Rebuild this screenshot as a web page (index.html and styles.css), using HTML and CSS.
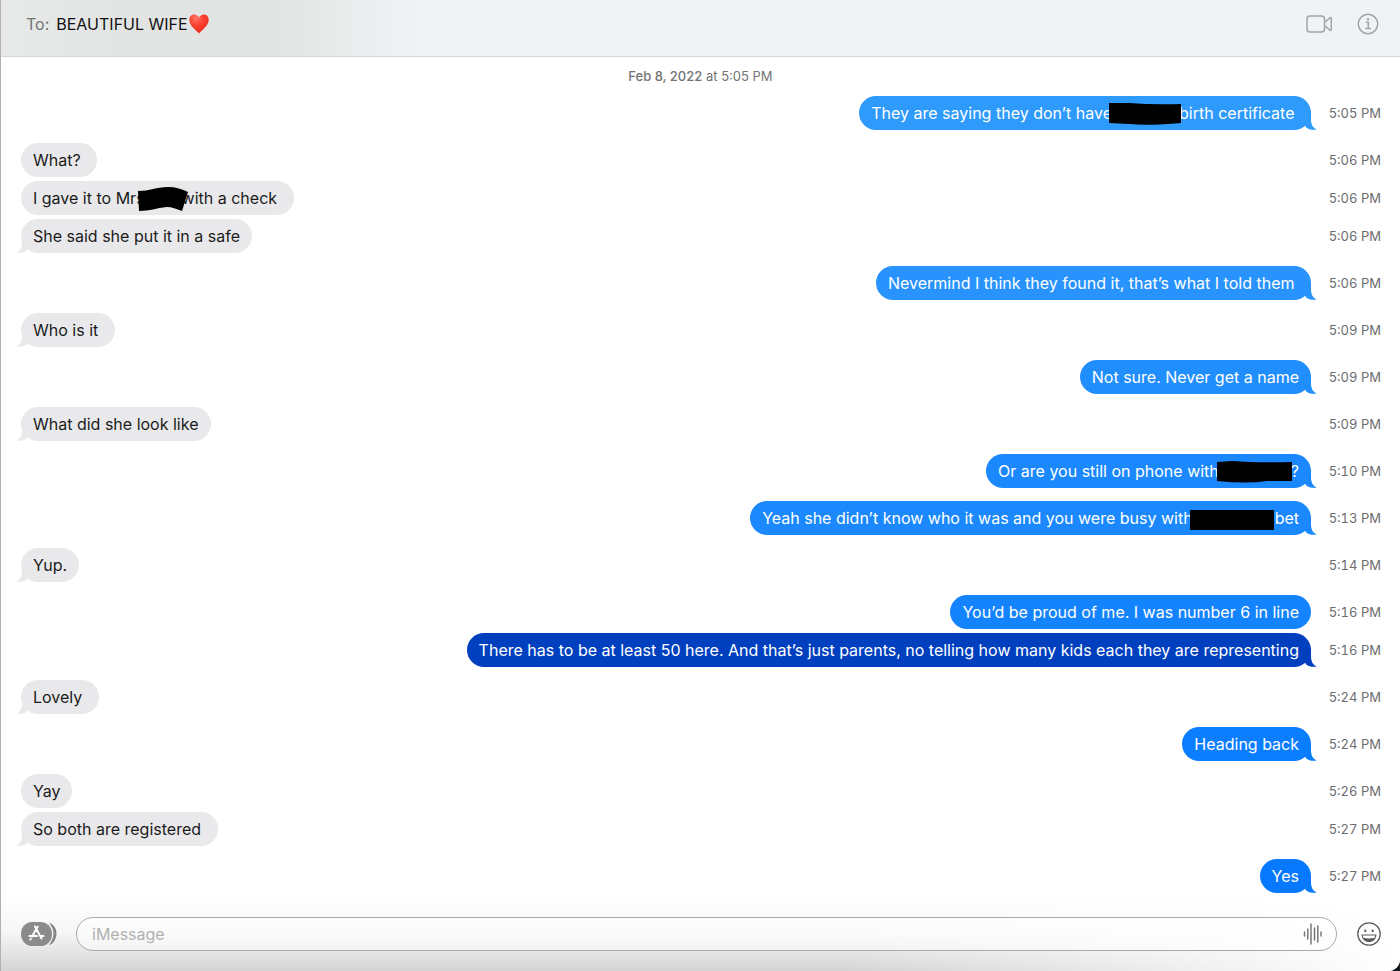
FILE: index.html
```
<!DOCTYPE html>
<html lang="en">
<head>
<meta charset="utf-8">
<meta name="viewport" content="width=device-width, initial-scale=1">
<title>Messages</title>
<link rel="stylesheet" href="styles.css">
</head>
<body>
<svg class="defs" width="0" height="0" aria-hidden="true">
  <symbol id="tail" viewBox="0 0 18 18"><path d="M4 0H12V7C12 12 13.500 15.800 17.800 17.500C13.500 18.300 10 17.500 7 15.200L4 10Z" fill="currentColor"/></symbol>
</svg>
<div class="window">
  <header class="topbar">
    <h1 class="recipient"><span class="to">To:</span><span class="name">BEAUTIFUL WIFE</span><svg class="heart" viewBox="0 0 20 20" role="img" aria-label="Red heart"><defs><radialGradient id="hg" cx="35%" cy="20%" r="85%"><stop offset="0" stop-color="#ff7867"/><stop offset=".4" stop-color="#fc4432"/><stop offset="1" stop-color="#e5261c"/></radialGradient></defs><path d="M10 19.500C7 16 .3 12 .3 5.800C.3 2.700 2.500.6 5.100.6C7.400.6 9.200 1.900 10 3.700C10.800 1.900 12.600.6 14.900.6C17.500.6 19.700 2.700 19.700 5.800C19.700 12 13 16 10 19.500Z" fill="url(#hg)"/></svg></h1>
    <div class="actions">
      <button class="icon-btn" type="button" aria-label="Video call"><svg width="27" height="20" viewBox="0 0 27 20"><rect x="1" y="2" width="17.500" height="16" rx="3" /><path d="M18.500 8.300L24 3.800Q25.300 3 25.300 4.500V15.500Q25.300 17 24 16.200L18.500 11.700"/></svg></button>
      <button class="icon-btn" type="button" aria-label="Details"><svg width="22" height="22" viewBox="0 0 22 22"><circle cx="11" cy="11" r="9.700"/><path d="M8.700 9.200H11.300V15.300M8.300 15.500H14"/><circle class="dot" cx="11" cy="6.200" r="1.200"/></svg></button>
    </div>
  </header>

  <main class="transcript">
    <p class="date"><b>Feb 8, 2022</b> at 5:05 PM</p>
    <ol class="messages">
      <li class="row sent t1"><p class="bubble">They are saying they don’t have<svg class="redact r1" viewBox="0 0 72 22" aria-hidden="true"><path d="M0 0H20Q45 2 72 1V20Q40 23 20 21L0 20Z"/></svg>birth certificate&nbsp;<svg class="tail"><use href="#tail"/></svg></p><time>5:05 PM</time></li>
      <li class="row got gap"><p class="bubble">What?&nbsp;</p><time>5:06 PM</time></li>
      <li class="row got"><p class="bubble">I gave it to Mrs<svg class="redact r2" viewBox="0 0 50 24" aria-hidden="true"><path d="M0 4C12 4 18 0 30 0C38 0 44 2 50 5L44 24C38 22 34 20 29 20C18 21 12 24 1 24Z"/></svg>with a check&nbsp;</p><time>5:06 PM</time></li>
      <li class="row got"><p class="bubble">She said she put it in a safe<svg class="tail"><use href="#tail"/></svg></p><time>5:06 PM</time></li>
      <li class="row sent gap t2"><p class="bubble">Nevermind I think they found it, that’s what I told them&nbsp;<svg class="tail"><use href="#tail"/></svg></p><time>5:06 PM</time></li>
      <li class="row got gap"><p class="bubble">Who is it&nbsp;<svg class="tail"><use href="#tail"/></svg></p><time>5:09 PM</time></li>
      <li class="row sent gap t3"><p class="bubble">Not sure. Never get a name<svg class="tail"><use href="#tail"/></svg></p><time>5:09 PM</time></li>
      <li class="row got gap"><p class="bubble">What did she look like<svg class="tail"><use href="#tail"/></svg></p><time>5:09 PM</time></li>
      <li class="row sent gap t4"><p class="bubble">Or are you still on phone with<svg class="redact r3" viewBox="0 0 75 22" aria-hidden="true"><path d="M0 1L15 0Q40 2 75 1V20H50Q30 23 0 20Z"/></svg>?<svg class="tail"><use href="#tail"/></svg></p><time>5:10 PM</time></li>
      <li class="row sent gap t4"><p class="bubble">Yeah she didn’t know who it was and you were busy with<svg class="redact r4" viewBox="0 0 84 20" aria-hidden="true"><path d="M0 0H84V20H0Z"/></svg>bet<svg class="tail"><use href="#tail"/></svg></p><time>5:13 PM</time></li>
      <li class="row got gap"><p class="bubble">Yup.<svg class="tail"><use href="#tail"/></svg></p><time>5:14 PM</time></li>
      <li class="row sent gap t5"><p class="bubble">You’d be proud of me. I was number 6 in line</p><time>5:16 PM</time></li>
      <li class="row sent selected"><p class="bubble">There has to be at least 50 here. And that’s just parents, no telling how many kids each they are representing<svg class="tail"><use href="#tail"/></svg></p><time>5:16 PM</time></li>
      <li class="row got gap"><p class="bubble">Lovely&nbsp;<svg class="tail"><use href="#tail"/></svg></p><time>5:24 PM</time></li>
      <li class="row sent gap t6"><p class="bubble">Heading back<svg class="tail"><use href="#tail"/></svg></p><time>5:24 PM</time></li>
      <li class="row got gap"><p class="bubble">Yay</p><time>5:26 PM</time></li>
      <li class="row got"><p class="bubble">So both are registered&nbsp;<svg class="tail"><use href="#tail"/></svg></p><time>5:27 PM</time></li>
      <li class="row sent gap t7"><p class="bubble">Yes<svg class="tail"><use href="#tail"/></svg></p><time>5:27 PM</time></li>
    </ol>
  </main>

  <footer class="composer">
    <button class="apps" type="button" aria-label="Apps"><svg width="38" height="26" viewBox="0 0 38 26"><path d="M29 2C34 3 36.500 8 36.500 12.500C36.500 17 34 23 29 24C31.500 21 33.500 17 33.500 12.500C33.500 8 31.500 5 29 2Z" fill="#858585"/><rect x="1" y="1" width="31" height="24" rx="11.500" fill="#8b8b8b"/><g stroke="#fff" stroke-width="2" stroke-linecap="round" fill="none"><path d="M15 5.500L21.500 17.500M17.800 5.500L12 15.500M9.500 15H17M20.500 15H23.500M10.800 17.800L10.300 18.500"/></g></svg></button>
    <div class="field">
      <input type="text" placeholder="iMessage" aria-label="iMessage">
      <button class="voice" type="button" aria-label="Record audio"><svg width="20" height="22" viewBox="0 0 20 22"><path d="M1.500 9V13M4.800 6V16M8 1V21M11.500 5V17M14.800 3V19M18 9V13" stroke="#777" stroke-width="1.500" stroke-linecap="round"/></svg></button>
    </div>
    <button class="emoji" type="button" aria-label="Emoji"><svg width="26" height="26" viewBox="0 0 26 26"><circle cx="13" cy="13" r="11.200" fill="none" stroke="#5c5c5c" stroke-width="1.300"/><ellipse cx="9.300" cy="9.800" rx="1.100" ry="1.400" fill="#5c5c5c"/><ellipse cx="16.700" cy="9.800" rx="1.100" ry="1.400" fill="#5c5c5c"/><path d="M5.500 13.500H20.500C20 18.500 17 21 13 21C9 21 6 18.500 5.500 13.500Z" fill="#5c5c5c"/><path d="M6.800 14.600H19.200L18.700 16.800Q13 18.300 7.300 16.800Z" fill="#fff"/></svg></button>
  </footer>
</div>
</body>
</html>
```
FILE: styles.css
```
* { box-sizing: border-box; }

body {
  margin: 0;
  background: #101820;
  font-family: Inter, "Liberation Sans", sans-serif;
  font-size: 16px;
  color: #1b1b1c;
}

.defs { position: absolute; }

button {
  padding: 0;
  border: 0;
  background: none;
  display: flex;
}

.window {
  min-height: 100vh;
  display: flex;
  flex-direction: column;
  background: #fff;
  border-left: 1px solid #b0b0b0;
  border-bottom-right-radius: 12px;
  overflow: hidden;
}

.topbar {
  height: 57px;
  padding: 0 21px 8px 25px;
  display: flex;
  align-items: center;
  justify-content: space-between;
  border-bottom: 1px solid #d5d7d8;
  background: linear-gradient(90deg, #e8eaea 0, #e1e4e3 10%, #e3e5e5 20%, #f0f2f4 30%, #f0f2f4 100%);
}

.recipient {
  margin: 0;
  display: flex;
  align-items: center;
  font-size: 16px;
  font-weight: 400;
  line-height: 20px;
}

.to { color: #727475; margin-right: 7px; }
.name { color: #111; }
.heart { width: 20px; height: 20px; margin-left: 1px; }

.actions { display: flex; align-items: center; gap: 24px; }

.icon-btn svg {
  fill: none;
  stroke: #a3a5a7;
  stroke-width: 1.500;
  stroke-linejoin: round;
}
.icon-btn .dot { fill: #a3a5a7; stroke: none; }

.transcript { flex: 1; }

.date {
  margin: 11px 0 12px;
  text-align: center;
  font-size: 13px;
  line-height: 16px;
  color: #737375;
}
.date b { font-weight: 500; }

.messages {
  list-style: none;
  margin: 0;
  padding: 0 19px 0 20px;
}

.row {
  display: flex;
  align-items: center;
  justify-content: space-between;
  margin-top: 4px;
}
.row:first-child { margin-top: 0; }
.row.gap { margin-top: 13px; }
.row.sent { justify-content: flex-end; }

.row time {
  width: 52px;
  margin-left: 18px;
  flex: none;
  display: flex;
  justify-content: flex-end;
  white-space: nowrap;
  font-size: 13px;
  font-variant-numeric: tabular-nums;
  color: #6c6c6e;
}

.bubble {
  position: relative;
  margin: 0;
  padding: 6px 12px;
  border-radius: 17px;
  line-height: 22px;
  background: var(--tint);
}

.got { --tint: #e9e9eb; }
.sent .bubble { color: #fff; }
.t1 { --tint: #2e9afc; }
.t2 { --tint: #2993fd; }
.t3 { --tint: #218efd; }
.t4 { --tint: #1b89fd; }
.t5 { --tint: #1484fe; }
.t6 { --tint: #0b7dff; }
.t7 { --tint: #0779ff; }
.selected { --tint: #0040bf; }

.tail {
  position: absolute;
  right: -6px;
  bottom: 0;
  width: 18px;
  height: 18px;
  color: var(--tint);
}
.got .tail { right: auto; left: -5px; transform: scaleX(-1); }

.redact {
  position: relative;
  z-index: 1;
  vertical-align: middle;
  fill: #000;
}
.r1 { width: 72px; height: 22px; margin: -6px -2px -4px -3px; }
.r2 { width: 50px; height: 24px; margin: -6px -6px -4px -7px; }
.r3 { width: 75px; height: 22px; margin: -6px -1px -4px -2px; }
.r4 { width: 84px; height: 20px; margin: -4px 1px -4px -3px; }

.composer {
  display: flex;
  align-items: center;
  padding: 24px 18px 20px 19px;
  background:
    linear-gradient(90deg, transparent 60%, #fff 100%),
    linear-gradient(180deg, #fff 0, #f6f6f6 50%, #d4d4d4 100%);
}

.field {
  flex: 1;
  height: 34px;
  margin: 0 19px 0 18px;
  padding: 0 13px 0 15px;
  display: flex;
  align-items: center;
  border: 1px solid #a9a9a9;
  border-radius: 17px;
  background: rgba(255, 255, 255, .5);
}

.field input {
  flex: 1;
  min-width: 0;
  padding: 0;
  border: 0;
  outline: 0;
  background: none;
  font: inherit;
}
.field input::placeholder { color: #b1b1b1; opacity: 1; }
```
